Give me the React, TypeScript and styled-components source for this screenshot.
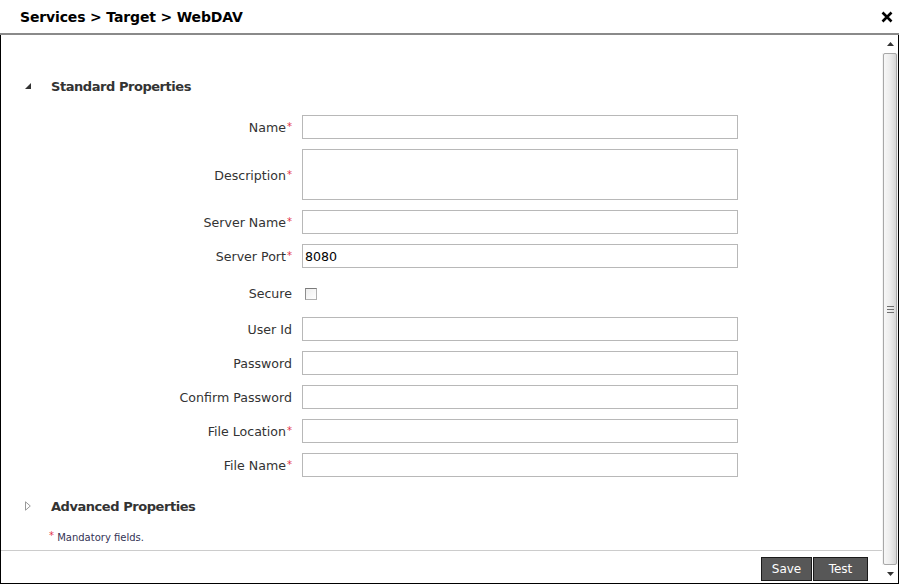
import styled, { createGlobalStyle } from "styled-components";

const GlobalStyle = createGlobalStyle`
    html, body {
        margin: 0;
        padding: 0;
        background: #ffffff;
    }
    body {
        font-family: "DejaVu Sans", "Liberation Sans", sans-serif;
        color: #333333;
    }
`;

const Window = styled.div`
    width: 899px;
    height: 584px;
    display: flex;
    flex-direction: column;
    box-sizing: border-box;
    overflow: hidden;
`;

const TitleBar = styled.div`
    height: 33px;
    border-bottom: 2px solid #8a8a8a;
    display: flex;
    align-items: center;
    justify-content: space-between;
    padding: 0 6px 0 20px;
    flex-shrink: 0;
`;

const Title = styled.h1`
    margin: 0;
    font-size: 14px;
    font-weight: bold;
    color: #000000;
    letter-spacing: -0.15px;
`;

const CloseButton = styled.button`
    border: none;
    background: none;
    padding: 0;
    width: 12px;
    height: 12px;
    display: flex;
    cursor: pointer;
`;

const Body = styled.div`
    flex: 1;
    display: flex;
    border: 1px solid #000000;
    border-top: none;
    min-height: 0;
`;

const Main = styled.div`
    flex: 1;
    display: flex;
    flex-direction: column;
`;

const Content = styled.div`
    flex: 1;
    padding-top: 41px;
`;

const SectionHeader = styled.div<{ $gap: number }>`
    height: 20px;
    display: flex;
    align-items: center;
    padding-left: 24px;
    gap: ${(p) => p.$gap}px;
    font-size: 13px;
    font-weight: bold;
    color: #333333;
    letter-spacing: -0.45px;
`;

const Form = styled.div`
    display: grid;
    grid-template-columns: 291px 436px;
    column-gap: 10px;
    row-gap: 10px;
    margin: 19px 0;
    align-items: center;
`;

const Label = styled.label`
    text-align: right;
    font-size: 12.6px;
    padding-top: 1px;
    color: #333333;
    white-space: nowrap;
`;

const Star = styled.span`
    color: #e3344a;
    font-size: 10px;
    vertical-align: 2px;
    margin-left: 1px;
`;

const TextInput = styled.input`
    box-sizing: border-box;
    width: 436px;
    height: 24px;
    border: 1px solid #b8b8b8;
    padding: 0 2px;
    font-family: "DejaVu Sans", sans-serif;
    font-size: 12.6px;
    color: #000000;
    outline: none;
`;

const TextArea = styled.textarea`
    box-sizing: border-box;
    width: 436px;
    height: 51px;
    border: 1px solid #b8b8b8;
    resize: none;
    font-family: "DejaVu Sans", sans-serif;
    font-size: 12px;
    outline: none;
    display: block;
`;

const CheckCell = styled.div`
    height: 29px;
    display: flex;
    align-items: center;
    padding: 2px 0 0 3px;
    box-sizing: border-box;
`;

const CheckBox = styled.span`
    box-sizing: border-box;
    width: 12px;
    height: 12px;
    border: 1px solid #b0b0b0;
    border-top-color: #7a7a7a;
    border-left-color: #8d8d8d;
    background: linear-gradient(135deg, #ededed, #ffffff);
`;

const Note = styled.div`
    margin-top: 13px;
    padding-left: 47px;
    font-size: 10px;
    line-height: 14px;
    color: #333355;
`;

const Footer = styled.div`
    border-top: 1px solid #cccccc;
    height: 32px;
    display: flex;
    align-items: center;
    justify-content: flex-end;
    gap: 1px;
    padding-right: 14px;
    flex-shrink: 0;
`;

const Button = styled.button<{ $width: number }>`
    width: ${(p) => p.$width}px;
    height: 24px;
    box-sizing: border-box;
    border: 1px solid #1a1a1a;
    background: #575757;
    color: #ffffff;
    font-family: "DejaVu Sans", sans-serif;
    font-size: 12px;
    padding: 0;
    margin-top: 4px;
    cursor: pointer;
`;

const ScrollBar = styled.div`
    width: 16px;
    display: flex;
    flex-direction: column;
    background: #f4f4f4;
    flex-shrink: 0;
`;

const Arrow = styled.div`
    height: 18px;
    display: flex;
    align-items: center;
    justify-content: center;
    background: #ffffff;
`;

const Thumb = styled.div`
    flex: 1;
    margin: 0 1px;
    border: 1px solid #a8a8a8;
    border-radius: 2px;
    background: linear-gradient(90deg, #f7f7f7 0%, #ebebeb 55%, #d6d6d6 100%);
    display: flex;
    align-items: center;
    justify-content: center;
`;

const Grip = styled.div`
    width: 7px;
    height: 7px;
    background: repeating-linear-gradient(180deg, #6e6e6e 0 1px, transparent 1px 3px);
`;

type Field = { label: string; required?: boolean; kind?: "area" | "check"; value?: string };

const fields: Field[] = [
    { label: "Name", required: true },
    { label: "Description", required: true, kind: "area" },
    { label: "Server Name", required: true },
    { label: "Server Port", required: true, value: "8080" },
    { label: "Secure", kind: "check" },
    { label: "User Id" },
    { label: "Password" },
    { label: "Confirm Password" },
    { label: "File Location", required: true },
    { label: "File Name", required: true },
];

export default function App() {
    return (
        <Window>
            <GlobalStyle />
            <TitleBar>
                <Title>Services &gt; Target &gt; WebDAV</Title>
                <CloseButton aria-label="close">
                    <svg width="12" height="12" viewBox="0 0 12 12">
                        <path d="M1.5 1.5 L10.5 10.5 M10.5 1.5 L1.5 10.5" stroke="#000" strokeWidth="2.6" />
                    </svg>
                </CloseButton>
            </TitleBar>
            <Body>
                <Main>
                    <Content>
                        <SectionHeader $gap={20}>
                            <svg width="6" height="6" viewBox="0 0 6 6">
                                <path d="M6 0 L6 6 L0 6 Z" fill="#333" />
                            </svg>
                            Standard Properties
                        </SectionHeader>
                        <Form>
                            {fields.map((f) => (
                                <>
                                    <Label key={f.label + "l"}>
                                        {f.label}
                                        {f.required && <Star>*</Star>}
                                    </Label>
                                    {f.kind === "area" ? (
                                        <TextArea key={f.label} />
                                    ) : f.kind === "check" ? (
                                        <CheckCell key={f.label}>
                                            <CheckBox />
                                        </CheckCell>
                                    ) : (
                                        <TextInput key={f.label} defaultValue={f.value} />
                                    )}
                                </>
                            ))}
                        </Form>
                        <SectionHeader $gap={20}>
                            <svg width="6" height="10" viewBox="0 0 6 10">
                                <path d="M0.5 0.8 L5.3 5 L0.5 9.2 Z" fill="none" stroke="#999" strokeWidth="1" />
                            </svg>
                            Advanced Properties
                        </SectionHeader>
                        <Note>
                            <Star>*</Star> Mandatory fields.
                        </Note>
                    </Content>
                    <Footer>
                        <Button $width={51}>Save</Button>
                        <Button $width={55}>Test</Button>
                    </Footer>
                </Main>
                <ScrollBar>
                    <Arrow>
                        <svg width="7" height="4" viewBox="0 0 7 4">
                            <path d="M3.5 0 L7 4 L0 4 Z" fill="#333" />
                        </svg>
                    </Arrow>
                    <Thumb>
                        <Grip />
                    </Thumb>
                    <Arrow>
                        <svg width="7" height="4" viewBox="0 0 7 4">
                            <path d="M0 0 L7 0 L3.5 4 Z" fill="#333" />
                        </svg>
                    </Arrow>
                </ScrollBar>
            </Body>
        </Window>
    );
}
